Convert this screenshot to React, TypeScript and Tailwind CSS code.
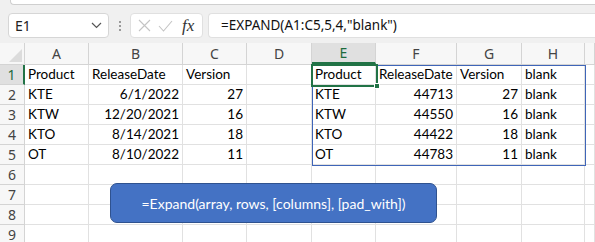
import React from "react";

const colW = ["w-[64px]", "w-[94px]", "w-[64px]", "w-[65px]", "w-[64px]", "w-[81px]", "w-[65px]", "w-[63px]", "flex-1"];
const letters = ["A", "B", "C", "D", "E", "F", "G", "H", ""];

type Cell = { t: string; r?: boolean };
const L = (t: string): Cell => ({ t });
const R = (t: string): Cell => ({ t, r: true });
const E: Cell = { t: "" };

const rows: Cell[][] = [
  [L("Product"), L("ReleaseDate"), L("Version"), E, L("Product"), L("ReleaseDate"), L("Version"), L("blank"), E],
  [L("KTE"), R("6/1/2022"), R("27"), E, L("KTE"), R("44713"), R("27"), L("blank"), E],
  [L("KTW"), R("12/20/2021"), R("16"), E, L("KTW"), R("44550"), R("16"), L("blank"), E],
  [L("KTO"), R("8/14/2021"), R("18"), E, L("KTO"), R("44422"), R("18"), L("blank"), E],
  [L("OT"), R("8/10/2022"), R("11"), E, L("OT"), R("44783"), R("11"), L("blank"), E],
  [E, E, E, E, E, E, E, E, E],
  [E, E, E, E, E, E, E, E, E],
  [E, E, E, E, E, E, E, E, E],
  [E, E, E, E, E, E, E, E, E],
];

const cellFont = { fontFamily: "Lato, 'Liberation Sans', sans-serif" };
const uiFont = { fontFamily: "'Noto Sans', 'Open Sans', sans-serif" };

export default function App() {
  return (
    <div className="relative w-[595px] h-[242px] overflow-hidden bg-[#f0f0f0]">
      {/* top strip */}
      <div className="h-[5px] pl-[10px]">
        <div className="h-[5px] bg-white border-b border-l border-[#cfcfcf] rounded-bl-[4px]" />
      </div>
      {/* formula bar */}
      <div className="h-[38px] flex items-start pt-[8px] pl-[8px] gap-0">
        <div
          className="w-[101px] h-[25px] bg-white border border-[#d6d6d6] rounded-[4px] flex items-center justify-between pl-[6px] pr-[6px] text-[14px] text-[#222]"
          style={uiFont}
        >
          <span>E1</span>
          <svg width="11" height="7" viewBox="0 0 11 7">
            <path d="M1 1 L5.5 5.5 L10 1" fill="none" stroke="#555" strokeWidth="1.2" />
          </svg>
        </div>
        <div className="w-[21px] h-[25px] flex flex-col items-center justify-center gap-[2px]">
          <div className="w-[2px] h-[2px] bg-[#9a9a9a]" />
          <div className="w-[2px] h-[2px] bg-[#9a9a9a]" />
          <div className="w-[2px] h-[2px] bg-[#9a9a9a]" />
        </div>
        <div className="w-[73px] h-[25px] bg-white border border-[#e0e0e0] rounded-[4px] flex items-center pl-[7px] gap-[7px]">
          <svg width="13" height="13" viewBox="0 0 13 13">
            <path d="M1 1 L12 12 M12 1 L1 12" stroke="#c4c4c4" strokeWidth="1.1" fill="none" />
          </svg>
          <svg width="15" height="12" viewBox="0 0 15 12">
            <path d="M1 6 L5.5 11 L14 1" stroke="#c4c4c4" strokeWidth="1.1" fill="none" />
          </svg>
          <span
            className="italic text-[17px] leading-none text-[#333] ml-[2px]"
            style={{ fontFamily: "'Liberation Serif', serif" }}
          >
            fx
          </span>
        </div>
        <div
          className="ml-[5px] flex-1 h-[25px] bg-white border border-[#e0e0e0] rounded-l-[4px] border-r-0 flex items-center pl-[12px] text-[13.5px] text-[#111]"
          style={uiFont}
        >
          =EXPAND(A1:C5,5,4,"blank")
        </div>
      </div>
      {/* column headers */}
      <div className="h-[22px] flex bg-[#f7f7f7] border-b border-[#d4d4d4]" style={uiFont}>
        <div className="w-[25px] h-full border-r border-[#d4d4d4] relative overflow-hidden">
          <svg className="absolute right-[2px] bottom-[2px]" width="13" height="13" viewBox="0 0 13 13">
            <path d="M13 0 L13 13 L0 13 Z" fill="#dcdcdc" />
          </svg>
        </div>
        {letters.map((l, i) => (
          <div
            key={i}
            className={`${colW[i]} h-full border-r border-[#d4d4d4] flex items-center justify-center text-[14px] ${
              l === "E" ? "bg-[#e0e0e0] text-[#1d6b3e] border-b-2 border-b-[#217346]" : "text-[#444]"
            }`}
          >
            {l}
          </div>
        ))}
      </div>
      {/* rows */}
      <div className="bg-white">
        {rows.map((row, ri) => (
          <div key={ri} className="h-[20px] flex">
            <div
              className={`w-[25px] h-full border-b border-[#d4d4d4] flex items-center justify-center text-[14px] ${
                ri === 0
                  ? "bg-[#e0e0e0] text-[#1d6b3e] border-r-2 border-r-[#217346]"
                  : "bg-[#f7f7f7] text-[#444] border-r border-r-[#d4d4d4]"
              }`}
              style={uiFont}
            >
              {ri + 1}
            </div>
            {row.map((c, ci) => (
              <div
                key={ci}
                className={`${colW[ci]} h-full border-r border-b border-[#e1e1e1] flex items-end pb-[1px] px-[3px] text-[13.5px] leading-[17px] text-black whitespace-nowrap ${
                  c.r ? "justify-end" : "justify-start"
                }`}
                style={cellFont}
              >
                {c.t}
              </div>
            ))}
          </div>
        ))}
      </div>
      {/* spill range border */}
      <div className="absolute left-[312px] top-[65px] w-[274px] h-[101px] border border-[#3f65b8] pointer-events-none" />
      {/* selected cell */}
      <div className="absolute left-[311px] top-[64px] w-[67px] h-[23px] border-2 border-[#217346] pointer-events-none" />
      <div className="absolute left-[374px] top-[83px] w-[6px] h-[6px] bg-[#217346] border border-white" />
      {/* shape */}
      <div
        className="absolute left-[110px] top-[183px] w-[327px] h-[40px] rounded-[7px] bg-[#4472c4] border border-[#2f528f] flex items-center justify-center text-white text-[14px]"
        style={cellFont}
      >
        =Expand(array, rows, [columns], [pad_with])
      </div>
    </div>
  );
}
